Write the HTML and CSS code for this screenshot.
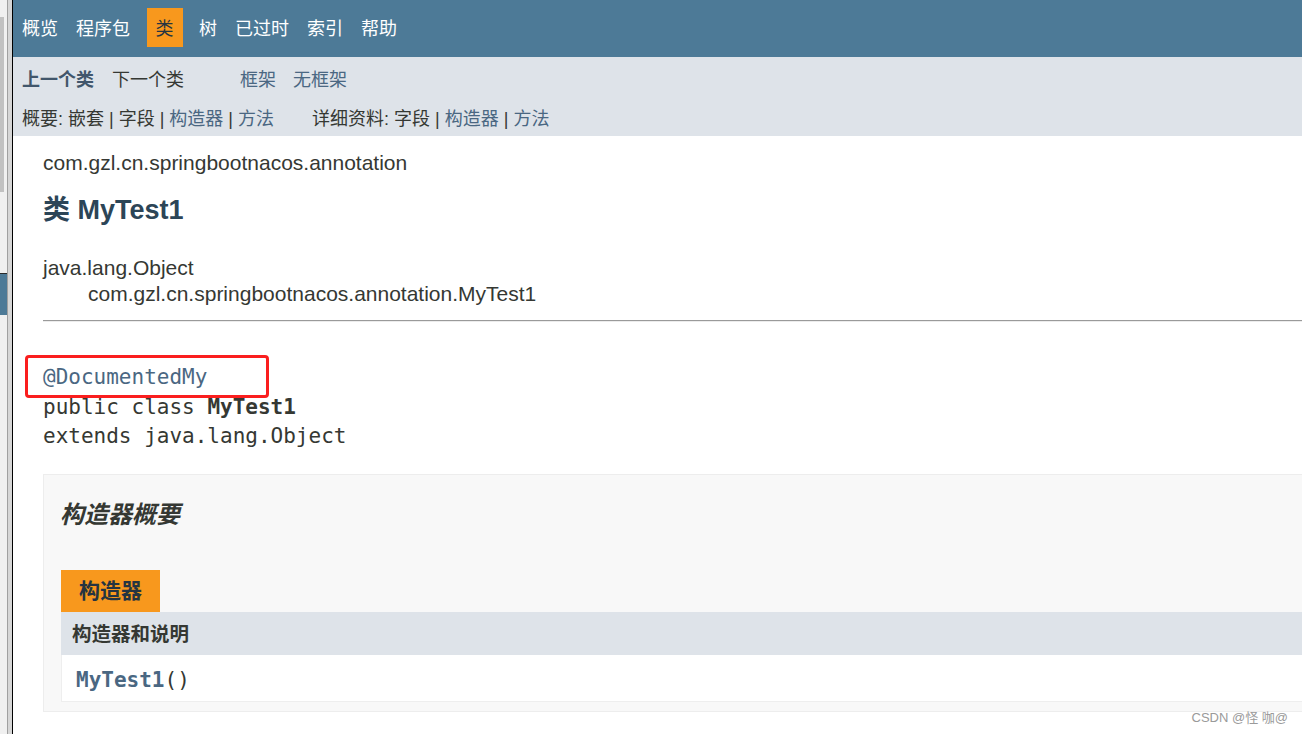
FILE: index.html
```
<!DOCTYPE html>
<html lang="zh-CN">
<head>
<meta charset="utf-8">
<title>MyTest1</title>
<link rel="stylesheet" href="styles.css">
</head>
<body>
<div class="page">
  <div class="strip">
    <div class="track">
      <div class="thumb"></div>
      <div class="track-blue"></div>
    </div>
    <div class="edge"></div>
  </div>
  <div class="main">
    <div class="top-nav">
      <ul class="nav-list">
        <li>概览</li>
        <li>程序包</li>
        <li class="active">类</li>
        <li>树</li>
        <li>已过时</li>
        <li>索引</li>
        <li>帮助</li>
      </ul>
    </div>
    <div class="sub-nav">
      <div class="sub-row">
        <span class="prev">上一个类</span>
        <span class="next">下一个类</span>
        <a class="link frames">框架</a>
        <a class="link noframes">无框架</a>
      </div>
      <div class="sub-row">
        <span class="group">概要:&nbsp;嵌套&nbsp;|&nbsp;字段&nbsp;|&nbsp;<a class="link">构造器</a>&nbsp;|&nbsp;<a class="link">方法</a></span>
        <span class="group detail">详细资料:&nbsp;字段&nbsp;|&nbsp;<a class="link">构造器</a>&nbsp;|&nbsp;<a class="link">方法</a></span>
      </div>
    </div>
    <div class="content">
      <div class="pkg">com.gzl.cn.springbootnacos.annotation</div>
      <h2 class="title">类 MyTest1</h2>
      <div class="inherit">java.lang.Object</div>
      <div class="inherit indent">com.gzl.cn.springbootnacos.annotation.MyTest1</div>
      <div class="rule"></div>
      <pre class="sig"><a class="link">@DocumentedMy</a>
public class <b>MyTest1</b>
extends java.lang.Object</pre>
      <div class="summary">
        <h3 class="summary-title">构造器概要</h3>
        <div class="tab">构造器</div>
        <div class="th">构造器和说明</div>
        <div class="td"><b class="link">MyTest1</b>()</div>
      </div>
    </div>
  </div>
</div>
<div class="highlight"></div>
<div class="watermark">CSDN @怪 咖@</div>
</body>
</html>
```
FILE: styles.css
```
html, body {
  margin: 0;
  padding: 0;
  background: #ffffff;
  font-family: "Liberation Sans", "Noto Sans CJK SC", sans-serif;
  color: #353833;
  overflow: hidden;
}

.page {
  display: flex;
  width: 1302px;
  height: 734px;
  overflow: hidden;
}

.strip {
  display: flex;
  width: 13px;
  flex: none;
  height: 734px;
}

.track {
  width: 7px;
  background: #f0f0f0;
  display: flex;
  flex-direction: column;
}

.thumb {
  margin-top: 17px;
  width: 4px;
  height: 175px;
  background: #c1c1c1;
}

.track-blue {
  margin-top: 81px;
  height: 41px;
  background: #4d7a97;
  border-top: 1px solid #2a2a2a;
}

.edge {
  width: 4px;
  background: #d6d6d6;
  border-left: 1px solid #a0a0a0;
  border-right: 1px solid #000000;
}

.main {
  flex: 1;
  min-width: 0;
  overflow: hidden;
}

.top-nav {
  background: #4d7a97;
  height: 57px;
  box-sizing: border-box;
  padding-top: 8px;
}

.nav-list {
  display: flex;
  list-style: none;
  margin: 0;
  padding: 0;
}

.nav-list li {
  padding: 4px 9px 0 9px;
  height: 35px;
  line-height: 35px;
  font-size: 18px;
  color: #ffffff;
}

.nav-list li.active {
  background: #f8981d;
  color: #253441;
  margin: 0 7.5px;
}

.sub-nav {
  background: #dee3e9;
  height: 79px;
  box-sizing: border-box;
  padding-left: 9px;
}

.sub-row {
  display: flex;
  align-items: center;
  height: 41px;
  font-size: 18px;
}

.sub-row + .sub-row {
  height: 37px;
}

.prev {
  font-weight: bold;
  color: #41566b;
}

.next {
  margin-left: 18px;
}

.link {
  color: #4a6782;
  text-decoration: none;
}

.frames {
  margin-left: 56px;
}

.noframes {
  margin-left: 17px;
}

.detail {
  margin-left: 38px;
}

.content {
  padding: 0 0 0 30px;
}

.pkg {
  font-size: 21px;
  line-height: 26px;
  margin-top: 14px;
}

.title {
  font-size: 27px;
  line-height: 32px;
  font-weight: bold;
  color: #2c4557;
  margin: 18px 0 29px 0;
}

.inherit {
  font-size: 21px;
  line-height: 26px;
}

.indent {
  padding-left: 45px;
}

.rule {
  margin-top: 13px;
  border-top: 1px solid #9a9a9a;
  border-bottom: 1px solid #ececec;
}

.sig {
  margin: 41px 0 0 0;
  font-family: "DejaVu Sans Mono", monospace;
  font-size: 21px;
  line-height: 29.5px;
  color: #353833;
}

.summary {
  margin-top: 22px;
  margin-right: -40px;
  background: #f8f8f8;
  border: 1px solid #ededed;
  padding: 0 0 9px 17px;
}

.summary-title {
  margin: 25px 0 0 -1px;
  font-size: 24px;
  line-height: 30px;
  font-style: italic;
  font-weight: bold;
  color: #353833;
}

.tab {
  margin-top: 40px;
  display: inline-block;
  background: #f8981d;
  color: #253441;
  font-weight: bold;
  font-size: 21px;
  height: 42px;
  line-height: 42px;
  padding: 0 18px;
  vertical-align: top;
}

.th {
  background: #dee3e9;
  height: 43px;
  line-height: 45px;
  padding-left: 11px;
  font-weight: bold;
  font-size: 19.5px;
}

.td {
  background: #ffffff;
  border: 1px solid #eeeeee;
  border-top: none;
  height: 46px;
  line-height: 51px;
  padding-left: 14px;
  font-family: "DejaVu Sans Mono", monospace;
  font-size: 21px;
}

.highlight {
  position: absolute;
  left: 25px;
  top: 355px;
  width: 238px;
  height: 37px;
  border: 3px solid #fa1e1e;
  border-radius: 4px;
}

.watermark {
  position: absolute;
  right: 14px;
  top: 709px;
  font-size: 13px;
  line-height: 18px;
  color: #9a9a9a;
}
```
